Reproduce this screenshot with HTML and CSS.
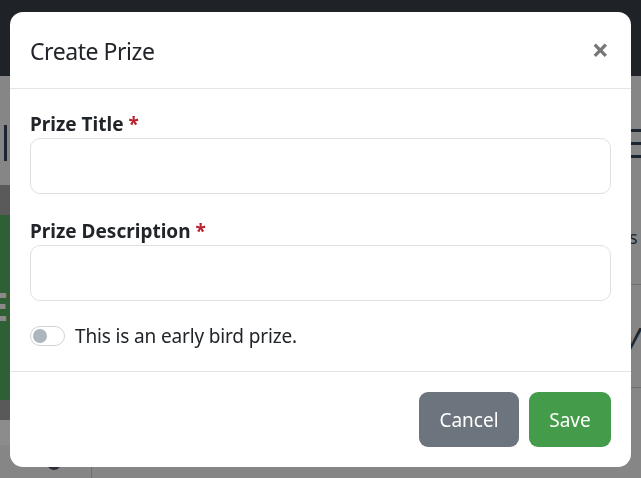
FILE: index.html
```html
<!DOCTYPE html>
<html lang="en">
<head>
<meta charset="utf-8">
<title>Create Prize</title>
<link rel="stylesheet" href="styles.css">
</head>
<body>
<div class="page">
  <header class="navbar"></header>
  <div class="page-main">
    <div class="side-left">
      <div class="sl-top"><span class="sl-bar"></span></div>
      <div class="sl-dark"></div>
      <div class="sl-green"><span class="sl-letter">E</span></div>
      <div class="sl-dark2"></div>
      <div class="sl-light"></div>
    </div>
    <div class="page-center">
      <div class="bottom-strip">
        <span class="avatar"></span>
        <span class="vline"></span>
      </div>
    </div>
    <div class="side-right">
      <div class="sr-lines"><span></span><span></span><span></span></div>
      <div class="sr-s">s</div>
      <div class="sr-rule"></div>
      <div class="sr-y">y</div>
      <div class="sr-rule sr-rule2"></div>
    </div>
  </div>
</div>

<div class="modal">
  <div class="modal-dialog">
    <div class="modal-content">
      <div class="modal-header">
        <h5 class="modal-title">Create Prize</h5>
        <button class="close" type="button" aria-label="Close">×</button>
      </div>
      <div class="modal-body">
        <div class="form-group">
          <label class="form-label">Prize Title <span class="req">*</span></label>
          <input class="form-control" type="text">
        </div>
        <div class="form-group">
          <label class="form-label">Prize Description <span class="req">*</span></label>
          <input class="form-control" type="text">
        </div>
        <div class="switch-row">
          <span class="switch"><span class="knob"></span></span>
          <span class="switch-label">This is an early bird prize.</span>
        </div>
      </div>
      <div class="modal-footer">
        <button class="btn btn-secondary" type="button">Cancel</button>
        <button class="btn btn-success" type="button">Save</button>
      </div>
    </div>
  </div>
</div>
</body>
</html>
```

FILE: styles.css
```css
* { box-sizing: border-box; }
html, body { margin: 0; padding: 0; height: 100%; }
body {
  background: #868686;
  font-family: "Noto Sans", "Open Sans", sans-serif;
  color: #212529;
  overflow: hidden;
}

/* background page (dimmed) */
.page { height: 478px; display: flex; flex-direction: column; }
.navbar { height: 76px; background: #1f2327; flex: none; }
.page-main { flex: 1; display: flex; }
.side-left { width: 10px; display: flex; flex-direction: column; }
.sl-top { height: 109px; padding: 49px 0 0 4px; }
.sl-bar { display: block; width: 3px; height: 36px; background: #1d2530; }
.sl-dark { height: 30px; background: #5a5a5a; }
.sl-green { height: 185px; background: #2f5f35; padding-top: 74px; overflow: hidden; }
.sl-letter { display: block; color: #8a8a8a; font-weight: 700; font-size: 40px; line-height: 34px; margin-left: -14px; }
.sl-dark2 { height: 20px; background: #595959; }
.sl-light { height: 25px; background: #8c8c8c; }
.page-center { flex: 1; display: flex; flex-direction: column; justify-content: flex-end; }
.bottom-strip { height: 33px; display: flex; align-items: flex-end; padding-left: 37px; gap: 30px; }
.avatar { width: 14px; height: 14px; border-radius: 50%; background: #2b2f38; margin-bottom: 8px; }
.vline { width: 1px; height: 33px; background: #6e6e6e; }
.side-right { width: 10px; display: flex; flex-direction: column; overflow: hidden; }
.sr-lines { padding-top: 53px; display: flex; flex-direction: column; gap: 10px; }
.sr-lines span { display: block; height: 3px; background: #1d2530; }
.sr-s { margin-top: 70px; font-size: 18px; line-height: 18px; color: #1d2530; margin-left: -2px; }
.sr-rule { margin-top: 38px; height: 1px; background: #6f6f6f; }
.sr-y { margin-top: 34px; font-size: 34px; line-height: 30px; color: #1d2530; margin-left: -6px; font-style: italic; }
.sr-rule2 { margin-top: 38px; }

/* modal */
.modal { position: fixed; inset: 0; }
.modal-dialog { margin: 12px 10px 0 10px; }
.modal-content {
  background: #fff;
  border-radius: 13px;
  display: flex;
  flex-direction: column;
  height: 455px;
  overflow: hidden;
}
.modal-header {
  height: 77px;
  padding: 0 20px;
  border-bottom: 1px solid #e3e6e9;
  display: flex;
  align-items: center;
  justify-content: space-between;
}
.modal-title {
  margin: 0;
  font-size: 23px;
  letter-spacing: -0.45px;
  font-weight: 400;
  line-height: 36px;
  color: #212529;
  padding-top: 3px;
}
.close {
  border: 0;
  background: transparent;
  padding: 0;
  margin-right: 2px;
  font-family: "Noto Sans", sans-serif;
  font-size: 30px;
  font-weight: 700;
  line-height: 1;
  color: #767676;
}
.modal-body { padding: 21px 20px 20px; height: 283px; }
.form-group { margin-bottom: 23px; }
.form-label {
  display: block;
  font-weight: 700;
  font-size: 19px;
  line-height: 28px;
  color: #212529;
}
.req { color: #b8232f; }
.form-control {
  display: block;
  width: 100%;
  height: 56px;
  border: 1px solid #dde1e6;
  border-radius: 10px;
  background: #fff;
}
.switch-row { display: flex; align-items: center; height: 29px; margin-top: -2px; gap: 10px; }
.switch {
  width: 35px;
  height: 20px;
  border: 1px solid #cfd4da;
  border-radius: 10px;
  display: flex;
  align-items: center;
  padding-left: 2px;
}
.knob { width: 14px; height: 14px; border-radius: 50%; background: #adb5bd; }
.switch-label { font-size: 19px; line-height: 29px; color: #212529; letter-spacing: -0.15px; }
.modal-footer {
  flex: 1;
  border-top: 1px solid #e3e6e9;
  padding: 20px;
  display: flex;
  justify-content: flex-end;
  align-items: flex-start;
  gap: 10px;
}
.btn {
  height: 55px;
  border: 0;
  border-radius: 9px;
  color: #fff;
  font-family: "Noto Sans", sans-serif;
  font-size: 19px;
  padding: 0;
}
.btn-secondary { background: #6c757d; width: 100px; }
.btn-success { background: #449b49; width: 82px; }
```
